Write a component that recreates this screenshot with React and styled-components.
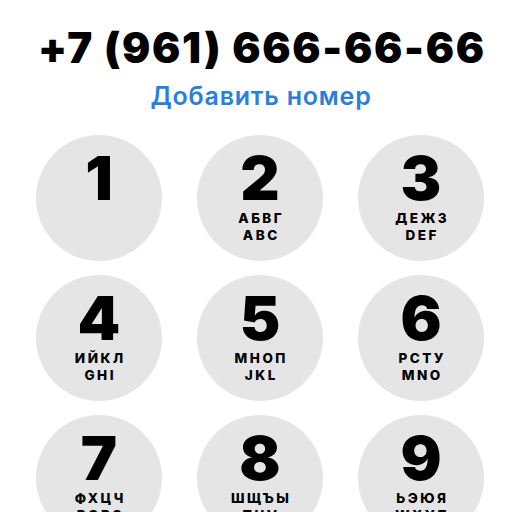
import React from "react";
import styled, { createGlobalStyle } from "styled-components";

const GlobalStyle = createGlobalStyle`
  html, body {
    margin: 0;
    padding: 0;
    background: #ffffff;
  }
  body {
    font-family: Inter, "Noto Sans", sans-serif;
    color: #000;
  }
`;

const Screen = styled.div`
  width: 512px;
  height: 512px;
  overflow: hidden;
  display: flex;
  flex-direction: column;
`;

const Header = styled.div`
  display: flex;
  flex-direction: column;
  align-items: center;
  padding-top: 27px;
  padding-left: 10px;
`;

const PhoneNumber = styled.div`
  font-size: 42px;
  font-weight: 900;
  line-height: 1;
  letter-spacing: 1.7px;
  margin-right: -1.7px;
`;

const AddLink = styled.div`
  margin-top: 15px;
  font-size: 25px;
  font-weight: 600;
  line-height: 1;
  letter-spacing: 0.8px;
  color: #2a80d8;
`;

const Keypad = styled.div`
  display: grid;
  grid-template-columns: repeat(3, 126px);
  grid-auto-rows: 126px;
  column-gap: 35px;
  row-gap: 14px;
  padding-left: 36px;
  margin-top: 26px;
`;

const Key = styled.div`
  width: 126px;
  height: 126px;
  border-radius: 50%;
  background: #e5e5e5;
  display: flex;
  flex-direction: column;
  align-items: center;
  padding-top: 13px;
  box-sizing: border-box;
`;

const Digit = styled.div`
  font-size: 61px;
  font-weight: 900;
  line-height: 1;
`;

const LetterBlock = styled.div`
  display: flex;
  flex-direction: column;
  align-items: center;
  margin-top: 1px;
`;

const Letters = styled.div`
  font-size: 13.5px;
  font-weight: 800;
  line-height: 17px;
  letter-spacing: 2.5px;
  margin-right: -2.5px;
`;

const keys = [
  { d: "1", l: [] },
  { d: "2", l: ["АБВГ", "ABC"] },
  { d: "3", l: ["ДЕЖЗ", "DEF"] },
  { d: "4", l: ["ИЙКЛ", "GHI"] },
  { d: "5", l: ["МНОП", "JKL"] },
  { d: "6", l: ["РСТУ", "MNO"] },
  { d: "7", l: ["ФХЦЧ", "PQRS"] },
  { d: "8", l: ["ШЩЪЫ", "TUV"] },
  { d: "9", l: ["ЬЭЮЯ", "WXYZ"] },
];

export default function App() {
  return (
    <Screen>
      <GlobalStyle />
      <Header>
        <PhoneNumber>+7 (961) 666-66-66</PhoneNumber>
        <AddLink>Добавить номер</AddLink>
      </Header>
      <Keypad>
        {keys.map((k) => (
          <Key key={k.d}>
            <Digit>{k.d}</Digit>
            {k.l.length > 0 && (
              <LetterBlock>
                {k.l.map((line) => (
                  <Letters key={line}>{line}</Letters>
                ))}
              </LetterBlock>
            )}
          </Key>
        ))}
      </Keypad>
    </Screen>
  );
}
